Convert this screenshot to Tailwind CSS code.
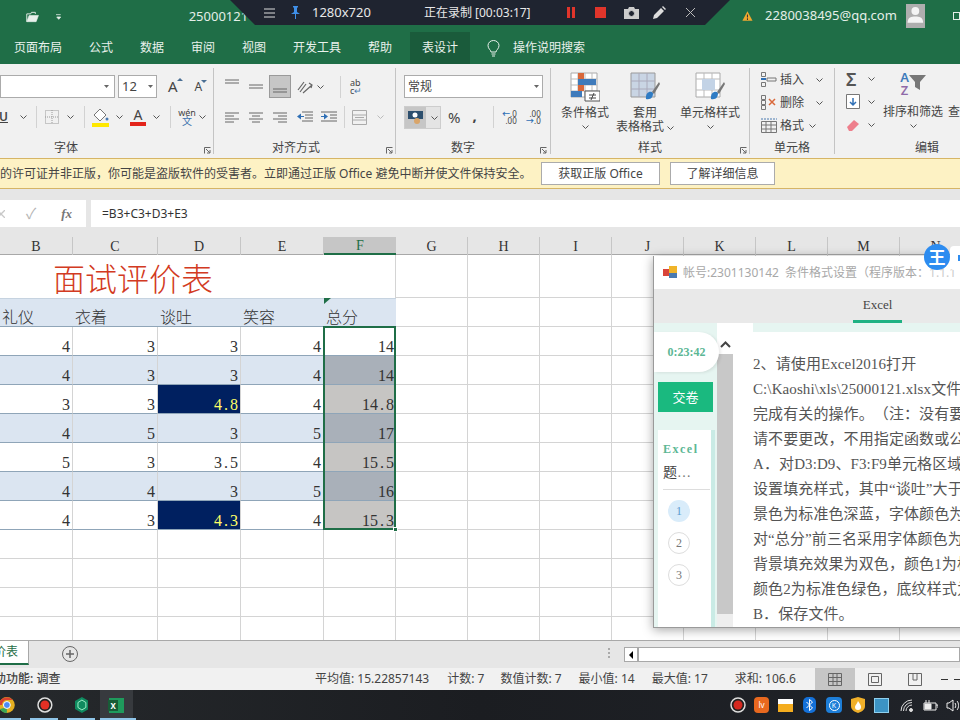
<!DOCTYPE html>
<html lang="zh">
<head>
  <meta charset="UTF-8">
  <title>25000121 - Excel</title>
  <script src="https://cdn.jsdelivr.net/npm/@tailwindcss/browser@4"></script>
</head>
<body class="bg-[#e6e6e6]">
<div class="relative w-[960px] h-[720px] overflow-hidden flex flex-col font-['Noto_Sans','Noto_Sans_CJK_SC',sans-serif] text-[#444]">

  <!-- title bar -->
  <header class="h-8 shrink-0 bg-[#1f6e47] flex items-center text-[#e4eee8]">
    <svg class="ml-[26px] mt-[2px] w-[17px] h-[14px]" viewBox="0 0 17 14"><path d="M1 13V3h5l1-2h5v2" fill="none" stroke="#e8f0ec" stroke-width="1.200"/><path d="M1 13l3-8h12l-3 8z" fill="#e8f0ec" stroke="#e8f0ec" stroke-width=".8"/></svg>
    <svg class="ml-[17px] mt-[2px] w-[7px] h-[8px]" viewBox="0 0 7 8"><path d="M0 1h6M1 4h5L3.500 7z" fill="#e8f0ec" stroke="#e8f0ec"/></svg>
    <span class="ml-[127px] mt-[1px] text-[13px]">25000121</span>
    <svg class="ml-[494px] w-[14px] h-[14px]" viewBox="0 0 14 14"><path d="M7 1l6.500 12H.5z" fill="#f0a830"/><path d="M7 5v4M7 10v2" stroke="#333" stroke-width="1.300"/></svg>
    <span class="ml-[12px] text-[13px] whitespace-nowrap">2280038495@qq.com</span>
    <div class="ml-[9px] w-6 h-6 bg-[#aeaeae] overflow-hidden">
      <svg viewBox="0 0 24 24"><circle cx="12" cy="9" r="5" fill="#f4f4f4"/><path d="M2 24c0-7 5-8 10-8s10 1 10 8z" fill="#f4f4f4"/></svg>
    </div>
    <span class="ml-[28px] w-[9px] h-[8px] border border-[#e4eee8]"></span>
  </header>

  <!-- ribbon tabs -->
  <nav class="h-8 shrink-0 bg-[#1f6e47] flex items-center gap-[27px] pl-[14px] text-xs text-[#e9f1ec]">
    <span>页面布局</span><span>公式</span><span>数据</span><span>审阅</span><span>视图</span><span>开发工具</span><span>帮助</span>
    <span class="-ml-[9px] h-8 w-[60px] bg-[#1a5b3b] flex items-center justify-center">表设计</span>
    <span class="-ml-[10px] flex items-center gap-[13px]">
      <svg class="w-[13px] h-[17px]" viewBox="0 0 13 17" fill="none" stroke="#e9f1ec"><path d="M4 12c0-2-3-3-3-6.500a5.500 5 0 0 1 11 0C12 9 9 10 9 12zM4.500 14h4M5 16h3"/></svg>
      操作说明搜索
    </span>
  </nav>

  <!-- ribbon -->
  <section class="h-[94px] shrink-0 bg-[#f1f1f1] flex text-xs text-[#444]">

    <!-- font group -->
    <div class="w-[214px] shrink-0 border-r border-[#c4c4c4] my-[4px] relative">
      <div class="flex items-center h-[23px] mt-[7px] gap-[3px]">
        <div class="w-[115px] h-[23px] bg-white border border-[#ababab] flex items-center justify-end pr-[5px]"><svg class="w-[5px] h-[3px]" viewBox="0 0 5 3"><path d="M0 0h5L2.500 3z" fill="#666"/></svg></div>
        <div class="w-[39px] h-[23px] bg-white border border-[#ababab] flex items-center justify-between px-[3px] text-[13px]">12<svg class="w-[5px] h-[3px]" viewBox="0 0 5 3"><path d="M0 0h5L2.500 3z" fill="#666"/></svg></div>
        <span class="ml-[8px] text-[15px] leading-none relative">A<i class="absolute -top-[1px] -right-[5px] w-0 h-0 border-x-[3px] border-x-transparent border-b-[3px] border-b-[#4a6f94]"></i></span>
        <span class="ml-[14px] text-[12px] leading-none relative">A<i class="absolute -top-[1px] -right-[5px] w-0 h-0 border-x-[3px] border-x-transparent border-t-[3px] border-t-[#4a6f94]"></i></span>
      </div>
      <div class="flex items-center h-[22px] mt-[8px]">
        <span class="w-[7px] text-[12px] font-semibold leading-none underline -ml-[1px]">U</span>
        <svg class="ml-[14px] w-[7px] h-[4px]" viewBox="0 0 7 4" fill="none" stroke="#555"><path d="M.5.500l3 3 3-3"/></svg>
        <i class="ml-[9px] w-px h-[22px] bg-[#d2d2d2]"></i>
        <svg class="ml-[8px] w-[14px] h-[14px]" viewBox="0 0 14 14" fill="none" stroke="#9a9a9a" stroke-dasharray="1 1"><path d="M.5.500h13v13H.5zM7 0v14M0 7h14"/></svg>
        <svg class="ml-[8px] w-[7px] h-[4px]" viewBox="0 0 7 4" fill="none" stroke="#555"><path d="M.5.500l3 3 3-3"/></svg>
        <i class="ml-[10px] w-px h-[22px] bg-[#d2d2d2]"></i>
        <svg class="ml-[7px] w-[17px] h-[19px]" viewBox="0 0 17 19"><path d="M8 1l6 6-6 6-6-6z" fill="#fff" stroke="#777"/><circle cx="15" cy="11" r="1.500" fill="#4a7ab0"/><rect y="15" width="17" height="4" fill="#ffe800"/></svg>
        <svg class="ml-[7px] w-[7px] h-[4px]" viewBox="0 0 7 4" fill="none" stroke="#555"><path d="M.5.500l3 3 3-3"/></svg>
        <span class="ml-[7px] w-4 text-[14px] leading-[14px] text-center border-b-[4px] border-[#e3241b]">A</span>
        <svg class="ml-[7px] w-[7px] h-[4px]" viewBox="0 0 7 4" fill="none" stroke="#555"><path d="M.5.500l3 3 3-3"/></svg>
        <i class="ml-[10px] w-px h-[22px] bg-[#d2d2d2]"></i>
        <span class="ml-[8px] w-[16px] flex flex-col items-center leading-[9px] text-[9px]"><span>wén</span><span class="text-[#3d73ae] text-[10px]">文</span></span>
        <svg class="ml-[4px] w-[7px] h-[4px]" viewBox="0 0 7 4" fill="none" stroke="#555"><path d="M.5.500l3 3 3-3"/></svg>
      </div>
      <div class="absolute -bottom-[2px] left-[54px]">字体</div>
      <svg class="absolute right-[2px] bottom-0 w-[7px] h-[7px]" viewBox="0 0 7 7" fill="none" stroke="#666"><path d="M.5 6.500v-6h6M2 2l4 4M6 3v3H3"/></svg>
    </div>

    <!-- alignment group -->
    <div class="w-[182px] shrink-0 border-r border-[#c4c4c4] my-[4px] relative pl-[11px]">
      <div class="flex items-center h-[23px] mt-[7px]">
        <svg class="w-[14px] h-[8px] -mt-[8px]" viewBox="0 0 14 8" stroke="#666"><path d="M0 1h14M0 4h14"/></svg>
        <svg class="ml-[10px] w-[14px] h-[8px]" viewBox="0 0 14 8" stroke="#666"><path d="M0 2h14M0 5h14"/></svg>
        <div class="ml-[6px] w-[22px] h-[23px] bg-[#c6c6c6] border border-[#9a9a9a] flex items-end justify-center pb-[3px]"><svg class="w-[14px] h-[8px]" viewBox="0 0 14 8" stroke="#666"><path d="M0 3h14M0 6h14"/></svg></div>
        <svg class="ml-[6px] w-[17px] h-[15px]" viewBox="0 0 17 15" fill="none" stroke="#666" stroke-width="1.200"><path d="M1 11l6-8M3 13l6-8M6 14l9-8M12 4l3 2-1 3"/></svg>
        <svg class="ml-[3px] w-[7px] h-[4px]" viewBox="0 0 7 4" fill="none" stroke="#555"><path d="M.5.500l3 3 3-3"/></svg>
        <i class="ml-[16px] w-px h-[22px] bg-[#d2d2d2]"></i>
        <span class="ml-[9px] text-[9px] leading-[8px] w-[13px]">ab<br>c<span class="text-[#4a7ab0]">↵</span></span>
      </div>
      <div class="flex items-center h-[22px] mt-[8px]">
        <svg class="w-[14px] h-[11px]" viewBox="0 0 14 11" stroke="#666"><path d="M0 1h14M0 4h9M0 7h14M0 10h9"/></svg>
        <svg class="ml-[10px] w-[14px] h-[11px]" viewBox="0 0 14 11" stroke="#666"><path d="M0 1h14M3 4h8M0 7h14M3 10h8"/></svg>
        <svg class="ml-[10px] w-[14px] h-[11px]" viewBox="0 0 14 11" stroke="#666"><path d="M0 1h14M5 4h9M0 7h14M5 10h9"/></svg>
        <svg class="ml-[10px] w-[16px] h-[12px]" viewBox="0 0 16 12"><path d="M5 1h11M8 4h8M8 7h8M5 10h11" stroke="#666"/><path d="M0 5.500l4-3v6z" fill="#2f6fb5"/><path d="M3 5.500h4" stroke="#2f6fb5"/></svg>
        <svg class="ml-[8px] w-[16px] h-[12px]" viewBox="0 0 16 12"><path d="M0 1h16M9 4h7M9 7h7M0 10h16" stroke="#666"/><path d="M7 5.500l-4-3v6z" fill="#2f6fb5"/><path d="M0 5.500h4" stroke="#2f6fb5"/></svg>
        <i class="ml-[7px] w-px h-[22px] bg-[#d2d2d2]"></i>
        <svg class="ml-[7px] w-[15px] h-[15px]" viewBox="0 0 15 15" fill="none" stroke="#aaa"><path d="M.5.500h14v14H.5zM0 5h15M0 10h15M3 7.500h9"/></svg>
        <svg class="ml-[10px] w-[7px] h-[4px]" viewBox="0 0 7 4" fill="none" stroke="#bbb"><path d="M.5.500l3 3 3-3"/></svg>
      </div>
      <div class="absolute -bottom-[2px] left-[58px]">对齐方式</div>
      <svg class="absolute right-[2px] bottom-0 w-[7px] h-[7px]" viewBox="0 0 7 7" fill="none" stroke="#666"><path d="M.5 6.500v-6h6M2 2l4 4M6 3v3H3"/></svg>
    </div>

    <!-- number group -->
    <div class="w-[155px] shrink-0 border-r border-[#c4c4c4] my-[4px] relative pl-[8px]">
      <div class="mt-[7px] w-[139px] h-[23px] bg-white border border-[#ababab] flex items-center justify-between px-[3px] text-xs">常规<svg class="w-[5px] h-[3px]" viewBox="0 0 5 3"><path d="M0 0h5L2.500 3z" fill="#666"/></svg></div>
      <div class="flex items-center h-[22px] mt-[8px]">
        <div class="w-[37px] h-[23px] flex bg-[#e4e4e4] border border-[#cdcdcd]">
          <div class="w-[21px] bg-[#c6c6c6] flex items-center justify-center">
            <svg class="w-[17px] h-[17px]" viewBox="0 0 17 17"><rect x="1" y="2" width="15" height="8" fill="#2d4f6e"/><circle cx="8" cy="6" r="2.500" fill="#fff"/><circle cx="10" cy="12" r="3" fill="#d9a56a"/></svg>
          </div>
          <svg class="ml-[5px] mt-[9px] w-[7px] h-[4px]" viewBox="0 0 7 4" fill="none" stroke="#555"><path d="M.5.500l3 3 3-3"/></svg>
        </div>
        <span class="ml-[7px] text-[15px] leading-none">%</span>
        <span class="ml-[12px] text-[15px] font-bold leading-none -mt-[4px]">,</span>
        <i class="ml-[16px] w-px h-[22px] bg-[#d2d2d2]"></i>
        <span class="ml-[7px] w-[16px] text-[8px] leading-[7px] text-right"><b class="text-[#2f6fb5]">←</b>.0<br>.00</span>
        <span class="ml-[8px] w-[16px] text-[8px] leading-[7px] text-right">.00<br><b class="text-[#2f6fb5]">→</b>.0</span>
      </div>
      <div class="absolute -bottom-[2px] left-[55px]">数字</div>
      <svg class="absolute right-[3px] bottom-0 w-[7px] h-[7px]" viewBox="0 0 7 7" fill="none" stroke="#666"><path d="M.5 6.500v-6h6M2 2l4 4M6 3v3H3"/></svg>
    </div>

    <!-- styles group -->
    <div class="w-[199px] shrink-0 border-r border-[#c4c4c4] my-[4px] relative">
      <div class="flex pt-[4px] text-center leading-[14px]">
        <div class="ml-[9px] w-[50px] flex flex-col items-center">
          <svg class="w-[30px] h-[30px]" viewBox="0 0 30 30"><path d="M1 1h26v24H1z" fill="#fff" stroke="#aaa"/><path d="M8 1v24M15 1v24M22 1v24M1 7h26M1 13h26M1 19h26" stroke="#bbb"/><path d="M8 1h6v6H8zM8 13h6v6H8z" fill="#d9683a"/><path d="M8 7h18v6H8zM1 19h11v6H1z" fill="#3f7bbb"/><path d="M15 19h15v10H15z" fill="#fff" stroke="#555"/><path d="M19 23h7M19 26h7M24 21l-3 7" stroke="#444"/></svg>
          <span class="mt-[4px] whitespace-nowrap">条件格式</span>
          <svg class="mt-[5px] w-[7px] h-[4px]" viewBox="0 0 7 4" fill="none" stroke="#555"><path d="M.5.500l3 3 3-3"/></svg>
        </div>
        <div class="ml-[7px] w-[56px] flex flex-col items-center">
          <svg class="w-[30px] h-[30px]" viewBox="0 0 30 30"><path d="M1 1h24v24H1z" fill="#c9d5e4" stroke="#999"/><path d="M9 1v24M17 1v24M1 9h24M1 17h24" stroke="#aab"/><path d="M16 27c-1-7 5-9 7-6 0 4-2 7-7 6z" fill="#2f7cc4"/><path d="M22 20l7-10 1 2-6 10z" fill="#777"/></svg>
          <span class="mt-[4px] whitespace-nowrap">套用</span>
          <span class="whitespace-nowrap">表格格式 <svg class="inline w-[7px] h-[4px]" viewBox="0 0 7 4" fill="none" stroke="#555"><path d="M.5.500l3 3 3-3"/></svg></span>
        </div>
        <div class="ml-[7px] w-[60px] flex flex-col items-center">
          <svg class="w-[30px] h-[30px]" viewBox="0 0 30 30"><path d="M1 1h24v24H1z" fill="#fff" stroke="#aaa"/><path d="M9 1v24M17 1v24M1 7h24M1 18h24" stroke="#bbb"/><path d="M7 7h13v11H7z" fill="#c3d3e6"/><path d="M16 27c-1-7 5-9 7-6 0 4-2 7-7 6z" fill="#2f7cc4"/><path d="M22 20l7-10 1 2-6 10z" fill="#777"/></svg>
          <span class="mt-[4px] whitespace-nowrap">单元格样式</span>
          <svg class="mt-[5px] w-[7px] h-[4px]" viewBox="0 0 7 4" fill="none" stroke="#555"><path d="M.5.500l3 3 3-3"/></svg>
        </div>
      </div>
      <div class="absolute -bottom-[2px] left-[87px]">样式</div>
      <svg class="absolute right-[2px] bottom-0 w-[7px] h-[7px]" viewBox="0 0 7 7" fill="none" stroke="#666"><path d="M.5 6.500v-6h6M2 2l4 4M6 3v3H3"/></svg>
    </div>

    <!-- cells group -->
    <div class="w-[85px] shrink-0 border-r border-[#c4c4c4] my-[4px] relative pl-[11px]">
      <div class="flex items-center h-[23px]">
        <svg class="w-[16px] h-[15px]" viewBox="0 0 16 15" fill="none" stroke="#777"><path d="M.5.500h4v4h-4zM.5 10.500h4v4h-4zM6 6h9v3H6z"/><path d="M0 7h5" stroke="#2f6fb5" stroke-width="2"/></svg>
        <span class="ml-[3px] w-[36px]">插入</span>
        <svg class="w-[7px] h-[4px]" viewBox="0 0 7 4" fill="none" stroke="#555"><path d="M.5.500l3 3 3-3"/></svg>
      </div>
      <div class="flex items-center h-[23px]">
        <svg class="w-[16px] h-[15px]" viewBox="0 0 16 15" fill="none" stroke="#777"><path d="M.5.500h4v4h-4zM.5 10.500h4v4h-4zM.5 5.500h4v4h-4z"/><path d="M8 4l6 6M14 4l-6 6" stroke="#d9683a" stroke-width="1.500"/></svg>
        <span class="ml-[3px] w-[36px]">删除</span>
        <svg class="w-[7px] h-[4px]" viewBox="0 0 7 4" fill="none" stroke="#555"><path d="M.5.500l3 3 3-3"/></svg>
      </div>
      <div class="flex items-center h-[23px]">
        <svg class="w-[16px] h-[15px]" viewBox="0 0 16 15" fill="none" stroke="#777"><path d="M.5 3.500h15v11H.5zM.5 7h15M.5 11h15M5 3v12M10 3v12"/><path d="M0 1h16" stroke="#4a7ab0" stroke-dasharray="2 1"/></svg>
        <span class="ml-[3px] w-[29px]">格式</span>
        <svg class="w-[7px] h-[4px]" viewBox="0 0 7 4" fill="none" stroke="#555"><path d="M.5.500l3 3 3-3"/></svg>
      </div>
      <div class="absolute -bottom-[2px] left-[24px]">单元格</div>
    </div>

    <!-- editing group -->
    <div class="flex-1 my-[4px] relative pl-[11px] flex">
      <div class="w-[37px] shrink-0 -mt-[1px]">
        <div class="flex items-center h-[23px]"><span class="w-[18px] text-[18px] leading-none font-semibold text-[#555]">Σ</span><svg class="ml-[4px] w-[7px] h-[4px]" viewBox="0 0 7 4" fill="none" stroke="#555"><path d="M.5.500l3 3 3-3"/></svg></div>
        <div class="flex items-center h-[23px]"><svg class="w-[14px] h-[15px]" viewBox="0 0 14 15"><path d="M.5.500h13v14H.5z" fill="#fff" stroke="#777"/><path d="M7 4v7M4 8l3 3 3-3" fill="none" stroke="#2f6fb5" stroke-width="1.500"/></svg><svg class="ml-[8px] w-[7px] h-[4px]" viewBox="0 0 7 4" fill="none" stroke="#555"><path d="M.5.500l3 3 3-3"/></svg></div>
        <div class="flex items-center h-[23px]"><svg class="w-[14px] h-[12px]" viewBox="0 0 14 12"><path d="M1 8l7-7 5 4-7 7H3z" fill="#ee7f8c"/></svg><svg class="ml-[8px] w-[7px] h-[4px]" viewBox="0 0 7 4" fill="none" stroke="#555"><path d="M.5.500l3 3 3-3"/></svg></div>
      </div>
      <div class="w-[60px] pt-[3px] flex flex-col items-center leading-[14px]">
        <span class="h-[30px] flex items-start">
          <span class="text-[13px] leading-[13px] font-semibold text-center"><span class="text-[#3f7bbb] block">A</span><span class="text-[#8f6aa8] block">Z</span></span>
          <svg class="mt-[4px] w-[17px] h-[15px]" viewBox="0 0 17 15"><path d="M0 0h17l-6 7v8l-5-3V7z" fill="#777"/></svg>
        </span>
        <span class="mt-[4px] whitespace-nowrap">排序和筛选</span>
        <svg class="mt-[5px] w-[7px] h-[4px]" viewBox="0 0 7 4" fill="none" stroke="#555"><path d="M.5.500l3 3 3-3"/></svg>
      </div>
      <span class="ml-[5px] mt-[36px]">查</span>
      <div class="absolute -bottom-[2px] left-[80px]">编辑</div>
    </div>
  </section>

  <!-- licence warning -->
  <div class="h-[31px] shrink-0 bg-[#fdf2c4] border-y border-[#d6b566] flex items-center text-xs text-[#444] whitespace-nowrap">
    <span class="w-[541px] pl-0 overflow-hidden">的许可证并非正版，你可能是盗版软件的受害者。立即通过正版 Office 避免中断并使文件保持安全。</span>
    <button class="w-[119px] h-[23px] bg-white border border-[#ababab]">获取正版 Office</button>
    <button class="ml-[10px] w-[105px] h-[23px] bg-white border border-[#ababab]">了解详细信息</button>
  </div>

  <!-- formula bar -->
  <div class="h-[27px] mt-[11px] shrink-0 flex gap-[5px]">
    <div class="w-[86px] bg-white flex items-center text-[#b5b5b5]">
      <svg class="-ml-[3px] w-[8px] h-[8px]" viewBox="0 0 8 8" stroke="#c8c8c8" stroke-width="1.300"><path d="M0 0l8 8M8 0L0 8"/></svg>
      <span class="ml-[21px] text-[15px] leading-none">✓</span>
      <span class="ml-[25px] text-[#777] text-[13px] italic font-['Liberation_Serif',serif] font-bold">fx</span>
    </div>
    <div class="flex-1 bg-white flex items-center pl-[11px] text-xs text-[#333]">=B3+C3+D3+E3</div>
  </div>

  <!-- sheet -->
  <main class="mt-[10px] flex-1 min-h-0 flex flex-col">
    <div id="col-heads" class="h-[18px] shrink-0 grid grid-cols-[73px_85px_83px_83px_72px_repeat(9,72px)] text-[14px] font-['Liberation_Serif',serif] bg-[#e6e6e6] border-b border-[#a8a8a8]"></div>
    <div id="cells" class="h-[385px] overflow-hidden bg-white grid grid-cols-[73px_85px_83px_83px_72px_repeat(9,72px)] grid-rows-[43px_repeat(13,29px)] relative"></div>
  </main>

  <!-- sheet tabs -->
  <div class="h-[28px] shrink-0 bg-[#e6e6e6] border-t border-[#a8a8a8] flex items-start relative">
    <div class="w-[29px] h-[24px] bg-white border-r border-[#a8a8a8] border-b-2 border-b-[#1f6e47] text-xs text-[#1f6e47] leading-[22px] overflow-hidden whitespace-nowrap"><span class="block -ml-[6px]">价表</span></div>
    <svg class="ml-[33px] mt-[5px] w-4 h-4" viewBox="0 0 16 16" fill="none" stroke="#666"><circle cx="8" cy="8" r="7.500"/><path d="M8 4v8M4 8h8" stroke-width="1.500"/></svg>
    <span class="ml-[530px] mt-[7px] w-[2px] h-[10px] border-l-2 border-dotted border-[#aaa]"></span>
    <div class="ml-[14px] mt-[6px] flex-1 h-[15px] bg-white border border-[#a8a8a8] flex items-center">
      <span class="w-[14px] h-full border-r-2 border-[#a8a8a8] flex items-center justify-center"><i class="w-0 h-0 border-y-[4px] border-y-transparent border-r-[4px] border-r-black"></i></span>
    </div>
  </div>

  <!-- status bar -->
  <footer class="h-[22px] shrink-0 bg-[#f1f1f1] flex items-center text-xs text-[#444] whitespace-nowrap [&>*]:shrink-0">
    <span class="-ml-[18px] w-[333px] font-medium">辅助功能: 调查</span>
    <span>平均值: 15.22857143</span>
    <span class="ml-[18px]">计数: 7</span>
    <span class="ml-[16px]">数值计数: 7</span>
    <span class="ml-[17px]">最小值: 14</span>
    <span class="ml-[17px]">最大值: 17</span>
    <span class="ml-[27px]">求和: 106.6</span>
    <span class="ml-[19px] w-[40px] h-full bg-[#c6c6c6] flex items-center justify-center">
      <svg class="w-[14px] h-[13px]" viewBox="0 0 14 13" fill="none" stroke="#666"><path d="M.5.500h13v12H.5zM5 0v13M9 0v13M0 4.500h14M0 8.500h14"/></svg>
    </span>
    <svg class="ml-[13px] w-[14px] h-[13px]" viewBox="0 0 14 13" fill="none" stroke="#666"><path d="M.5.500h13v12H.5zM3.500 3.500h7v6h-7z"/></svg>
    <svg class="ml-[26px] w-[14px] h-[13px]" viewBox="0 0 14 13" fill="none" stroke="#666"><path d="M.5 12.500V.500h13v12zM5 0v7h4V0"/></svg>
    <span class="ml-[19px] w-[7px] h-px bg-[#333]"></span>
    <span class="ml-[6px] w-[7px] h-px bg-[#333]"></span>
  </footer>

  <!-- taskbar -->
  <div class="h-[30px] shrink-0 bg-gradient-to-r from-[#26292c] via-[#1b1d21] to-[#202329] flex items-center relative">
    <svg class="ml-0 w-[16px] h-[16px] -translate-x-[1px]" viewBox="0 0 16 16"><circle cx="8" cy="8" r="8" fill="#e4b021"/><path d="M0 8a8 8 0 0 1 14-5H8a5 5 0 0 0-5 5z" fill="#d8412f"/><path d="M8 16a8 8 0 0 1-7-4l4-1 3 1z" fill="#3aa757"/><circle cx="8" cy="8" r="3.500" fill="#4b8bf5" stroke="#fff"/></svg>
    <svg class="ml-[21px] w-[16px] h-[16px]" viewBox="0 0 16 16"><circle cx="8" cy="8" r="7" fill="#222" stroke="#ddd" stroke-width="1.500"/><circle cx="8" cy="8" r="4.500" fill="#e53024"/></svg>
    <svg class="ml-[22px] w-[14px] h-[16px]" viewBox="0 0 14 16"><path d="M7 0l7 4v8l-7 4-7-4V4z" fill="#0f8a5f"/><path d="M7 3l4 2.500v5L7 13l-4-2.500v-5z" fill="none" stroke="#9ef0c8"/></svg>
    <div class="ml-[12px] w-[33px] h-full bg-[#373a3e] flex items-center justify-center">
      <div class="w-[15px] h-[15px] bg-[#1f9a5c] relative"><span class="absolute -left-[1px] top-[2px] w-[10px] h-[11px] bg-[#185c37] text-white text-[8px] font-bold leading-[11px] text-center">X</span></div>
    </div>
    <div class="ml-[597px] flex items-center">
      <svg class="w-[16px] h-[16px]" viewBox="0 0 16 16"><circle cx="8" cy="8" r="7" fill="#222" stroke="#ddd" stroke-width="1.500"/><circle cx="8" cy="8" r="4.500" fill="#d5281f"/></svg>
      <span class="ml-[8px] w-[15px] h-[16px] rounded-[4px] bg-[#e8681f] text-white text-[8px] text-center leading-[16px]">lv</span>
      <span class="ml-[9px] w-[15px] h-[13px] bg-white flex flex-col justify-end"><i class="block h-[8px] bg-[#f4ad1f]"></i></span>
      <svg class="ml-[10px] w-[13px] h-[16px]" viewBox="0 0 13 16"><rect width="13" height="16" rx="5" fill="#1470d8"/><path d="M3.500 5l6 6-3 2.500v-11l3 2.500-6 6" fill="none" stroke="#fff"/></svg>
      <span class="ml-[10px] w-[16px] h-[16px] rounded-[4px] bg-[#1d7ed8] flex items-center justify-center"><i class="w-[11px] h-[11px] rounded-full border border-white text-white text-[7px] not-italic leading-[10px] text-center">K</i></span>
      <svg class="ml-[9px] w-[14px] h-[16px]" viewBox="0 0 14 16"><path d="M0 2l7-2 7 2v7c0 4-4 6-7 7-3-1-7-3-7-7z" fill="#f0b02a"/><path d="M7 4c2 3 3 4 3 6a3 3 0 0 1-6 0c0-2 2-3 3-6z" fill="#fff"/></svg>
      <span class="ml-[9px] w-[15px] h-[15px] bg-[#3c93c4] border border-[#8fd0ee]"></span>
      <svg class="ml-[11px] w-[13px] h-[13px]" viewBox="0 0 13 13" fill="none" stroke="#ddd"><path d="M1 12a11 11 0 0 1 11-11M3.500 12A8.500 8.500 0 0 1 12 3.500M6 12a6 6 0 0 1 6-6"/><circle cx="11" cy="11" r="1.500" fill="#ddd"/></svg>
      <svg class="ml-[9px] w-[16px] h-[11px]" viewBox="0 0 16 11" fill="none" stroke="#eee"><path d="M2 3h12v7H2zM14 5h2v3"/><path d="M3 4h6v5H3z" fill="#eee"/><path d="M4 0v3M7 0v3"/></svg>
      <svg class="ml-[8px] w-[14px] h-[13px]" viewBox="0 0 14 13" fill="none" stroke="#eee"><path d="M1 4h2l4-3v11L3 9H1zM9 4c1 1 1 4 0 5M11 2c2 2 2 7 0 9"/></svg>
    </div>
    <i class="absolute bottom-0 left-0 w-[21px] h-[2px] bg-[#8fc5e8]"></i>
    <i class="absolute bottom-0 left-[30px] w-[28px] h-[2px] bg-[#8fc5e8]"></i>
    <i class="absolute bottom-0 left-[67px] w-[28px] h-[2px] bg-[#8fc5e8]"></i>
    <i class="absolute bottom-0 left-[100px] w-[36px] h-[2px] bg-[#8fc5e8]"></i>
  </div>

  <!-- screen recorder toolbar -->
  <div class="absolute top-0 left-[230px] w-[500px] h-[25px] bg-[#1f2430] [clip-path:polygon(0_0,100%_0,95%_100%,5%_100%)] flex items-center text-[13px] text-[#e8e8e8] whitespace-nowrap">
    <svg class="ml-[34px] w-[11px] h-[10px]" viewBox="0 0 11 10" stroke="#ddd"><path d="M0 1h11M0 5h11M0 9h11"/></svg>
    <svg class="ml-[16px] w-[9px] h-[13px]" viewBox="0 0 9 13"><path d="M2 0h5v1L6 2v4l3 2H0l3-2V2L2 1zM4 8h1v5H4z" fill="#3f8fe8"/></svg>
    <span class="ml-[12px]">1280x720</span>
    <span class="ml-[53px] text-xs">正在录制 [00:03:17]</span>
    <span class="ml-[36px] w-[8px] h-[11px] border-x-[3px] border-[#e0352b]"></span>
    <span class="ml-[20px] w-[11px] h-[11px] bg-[#e0352b]"></span>
    <svg class="ml-[18px] w-[15px] h-[12px]" viewBox="0 0 15 12"><path d="M0 2h4l1-2h5l1 2h4v10H0z" fill="#ccc"/><circle cx="7.500" cy="6.500" r="3" fill="#1f2430" stroke="#ccc"/></svg>
    <svg class="ml-[14px] w-[13px] h-[13px]" viewBox="0 0 13 13"><path d="M0 13l1-4 7-7 3 3-7 7zM9 1l1-1 3 3-1 1z" fill="#ddd"/></svg>
    <svg class="ml-[20px] w-[9px] h-[9px]" viewBox="0 0 9 9" stroke="#bbb"><path d="M0 0l9 9M9 0L0 9"/></svg>
  </div>

  <!-- exam window -->
  <div class="absolute left-[653px] top-[256px] w-[320px] h-[372px] bg-white border-l border-b border-[#9a9a9a] shadow-[0_2px_10px_rgba(0,0,0,.35)] flex flex-col font-['Liberation_Serif','Noto_Sans_CJK_SC',serif]">
    <div class="h-[33px] shrink-0 flex items-center pl-[9px] text-xs text-[#a8a8a8] whitespace-nowrap font-['Noto_Sans','Noto_Sans_CJK_SC',sans-serif]">
      <svg class="w-[14px] h-[13px]" viewBox="0 0 14 13"><rect y="3" width="7" height="7" fill="#d9453a"/><rect x="6" width="8" height="7" fill="#f0b429"/><rect x="6" y="7" width="8" height="5" fill="#4a7ab0"/></svg>
      <span class="ml-[6px]">帐号:2301130142&nbsp;&nbsp;条件格式设置（程序版本：<span class="text-[#ccc]">1.1.1</span></span>
    </div>
    <div class="h-[34px] shrink-0 bg-[#e9e9e9] flex justify-start">
      <div class="ml-[199px] w-[49px] h-full border-b-[3px] border-b-[#1fb183] flex items-center justify-center text-[13px] text-[#444]">Excel</div>
    </div>
    <div class="flex-1 min-h-0 flex">
      <div class="w-[63px] shrink-0 bg-[#e6f5f1] relative">
        <div class="w-[65px] h-[40px] mt-[9px] bg-white rounded-r-[20px] flex items-center justify-center text-xs font-bold text-[#5cb795] shadow-[2px_1px_3px_rgba(0,0,0,.08)]">0:23:42</div>
        <button class="ml-[4px] mt-[10px] w-[55px] h-[30px] bg-[#1ab97f] text-white text-[13px] font-['Noto_Sans_CJK_SC',sans-serif] block">交卷</button>
        <div class="ml-[4px] mt-[18px] w-[57px] h-[197px] bg-white border-r-[4px] border-[#c9ebe5] px-[5px] pt-[11px]">
          <div class="text-xs font-bold tracking-[1.5px] text-[#5cb795] leading-[16px]">Excel</div>
          <div class="mt-[5px] text-sm text-[#444] leading-[22px] whitespace-nowrap">题<span class="text-[#777]">…</span></div>
          <div class="mt-[5px] border-t border-[#ddd] -mr-[4px] pl-[5px] pt-[10px] flex flex-col gap-[10px] items-start text-xs text-[#777]">
            <span class="w-[22px] h-[22px] rounded-full bg-[#d9ecfa] text-[#5b9bd0] flex items-center justify-center">1</span>
            <span class="w-[22px] h-[22px] rounded-full border border-[#ddd] flex items-center justify-center">2</span>
            <span class="w-[22px] h-[22px] rounded-full border border-[#ddd] flex items-center justify-center">3</span>
          </div>
        </div>
      </div>
      <div class="w-[16px] shrink-0 bg-white flex flex-col items-center">
        <svg class="mt-[18px] w-[11px] h-[7px]" viewBox="0 0 11 7" fill="none" stroke="#444" stroke-width="2"><path d="M1 6l4.500-4.500L10 6"/></svg>
        <div class="mt-[6px] w-full h-[260px] bg-[#c8c8c8]"></div>
        <div class="w-full flex-1 bg-[#eee]"></div>
      </div>
      <div class="flex-1 flex flex-col">
        <div class="ml-[20px] h-[9px] bg-[#e6f5f1]"></div>
        <div class="pl-[20px] pt-[20px] text-[15px] leading-[25px] tracking-[.1px] [text-spacing-trim:space-all] text-[#555] whitespace-nowrap">
          <p>2、请使用Excel2016打开</p>
          <p>C:\Kaoshi\xls\25000121.xlsx文件</p>
          <p>完成有关的操作。（注：没有要</p>
          <p>请不要更改，不用指定函数或公</p>
          <p>A．对D3:D9、F3:F9单元格区域</p>
          <p>设置填充样式，其中“谈吐”大于</p>
          <p>景色为标准色深蓝，字体颜色为</p>
          <p>对“总分”前三名采用字体颜色为</p>
          <p>背景填充效果为双色，颜色1为标</p>
          <p>颜色2为标准色绿色，底纹样式为</p>
          <p>B．保存文件。</p>
        </div>
      </div>
    </div>
  </div>

  <!-- badge on exam window -->
  <div class="absolute left-[924px] top-[244px] w-[26px] h-[26px] rounded-full bg-[#2d8cf0] text-white text-[17px] font-bold flex items-center justify-center font-['Noto_Sans_CJK_SC',sans-serif]">王</div>
  <div class="absolute left-[950px] top-[246px] w-[10px] h-[24px] bg-white rounded-l-[4px] overflow-hidden flex items-center pl-[8px]"><i class="w-[2px] h-[6px] bg-[#2d8cf0]"></i></div>
</div>

<script>
  const letters = ["B", "C", "D", "E", "F", "G", "H", "I", "J", "K", "L", "M", "N", ""];
  document.getElementById("col-heads").innerHTML = letters.map(l => {
    const cls = l == "F" ? "bg-[#c6c6c6] border-b-2 border-[#1f6e47] text-[#1f6e47]" : "border-r border-[#c6c6c6] text-[#333]";
    return `<div class="${cls} h-[18px] flex items-center justify-center">${l}</div>`;
  }).join("");

  const numbers = [
    [4, 3, 3, 4, 14],
    [4, 3, 3, 4, 14],
    [3, 3, 4.8, 4, 14.8],
    [4, 5, 3, 5, 17],
    [5, 3, 3.5, 4, 15.5],
    [4, 4, 3, 5, 16],
    [4, 3, 4.3, 4, 15.3]
  ];
  const plain = "border-r border-b border-[#d4d4d4]";
  const tableLine = "border-b border-[#8fa5b8]";
  const serif = "font-['Liberation_Serif',serif] text-[16px] flex items-end justify-end pr-[2px] leading-[15px] pb-[1px] text-[#333]";
  const showNum = v => String(v).replace(".", `<span class="inline-block w-2 text-center">.</span>`);

  let html = `<div class="col-span-5 border-r border-[#d4d4d4] pl-[53px] text-[32px] leading-[44px] text-[#d23a22] font-['Noto_Sans_CJK_SC',sans-serif] font-light whitespace-nowrap">面试评价表</div>`;
  for (let i = 0; i < 9; i++) html += `<div class="${plain}"></div>`;

  ["礼仪", "衣着", "谈吐", "笑容", "总分"].forEach(h => {
    html += `<div class="bg-[#dbe5f1] ${tableLine} border-t border-t-[#c6d3e0] pl-[2px] pb-[1px] text-[16px] leading-[16px] flex items-end text-[#333] font-light">${h}</div>`;
  });
  for (let i = 0; i < 9; i++) html += `<div class="${plain}"></div>`;

  numbers.forEach((row, r) => {
    const band = r % 2 == 1;
    row.forEach((v, c) => {
      let bg = band ? "bg-[#dbe5f1]" : "bg-white";
      if (c == 2 && (v == 4.8 || v == 4.3)) bg = "bg-[#002060] text-[#ffff66]";
      if (c == 4 && r > 0) bg = band ? "bg-[#a9b0b9]" : "bg-[#c6c5c3]";
      html += `<div class="${serif} ${bg} ${tableLine} ${c < 4 ? "border-r border-r-[#d4d4d4]" : ""}">${showNum(v)}</div>`;
    });
    for (let i = 0; i < 9; i++) html += `<div class="${plain}"></div>`;
  });
  for (let i = 0; i < 70; i++) html += `<div class="${plain}"></div>`;
  // selection box and marker over the F column
  html += `<i class="absolute left-[323px] top-[71px] w-[73px] h-[204px] border-2 border-[#1f6e47]"></i>`;
  html += `<i class="absolute left-[393px] top-[272px] w-[5px] h-[5px] bg-[#1f6e47] border border-white"></i>`;
  html += `<i class="absolute left-[324px] top-[43px] w-0 h-0 border-t-[6px] border-t-[#1f6e47] border-r-[7px] border-r-transparent"></i>`;
  document.getElementById("cells").innerHTML = html;
</script>
</body>
</html>
